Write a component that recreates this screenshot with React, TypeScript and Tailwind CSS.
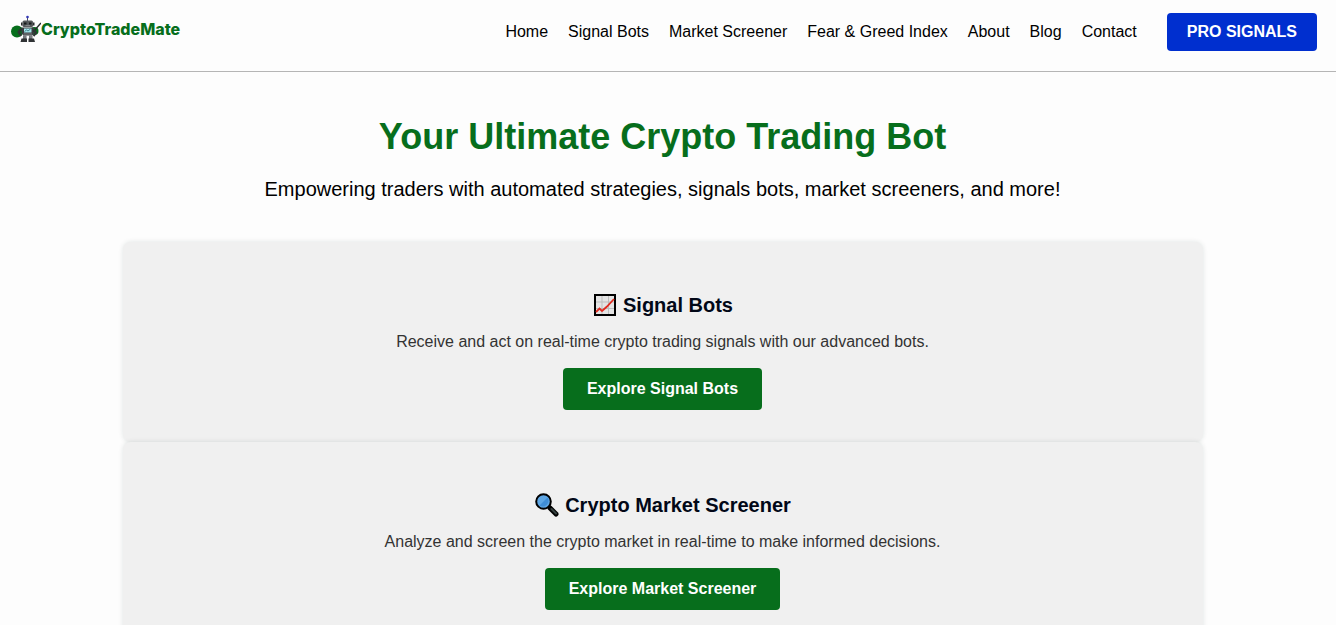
import type { ReactNode } from 'react'

const NAV_LINKS = [
  'Home',
  'Signal Bots',
  'Market Screener',
  'Fear & Greed Index',
  'About',
  'Blog',
  'Contact',
]

function RobotLogo() {
  return (
    <svg viewBox="0 0 30 28" className="h-7 w-[30px] shrink-0" aria-hidden="true">
      <circle cx="6" cy="16.500" r="6" fill="#076e1c" />
      <circle cx="23.500" cy="16" r="4" fill="#076e1c" />
      <path d="M16.500 6V2" stroke="#4a4c66" strokeWidth="1" />
      <circle cx="16.500" cy="2" r="1.300" fill="#3338b8" />
      <rect x="11.500" y="5.500" width="10.500" height="6.500" rx="1.500" fill="#55585b" />
      <path d="M10 7.500h1.500v3H10zM22 7.500h1.500v3H22z" fill="#2b2d2f" />
      <path d="M13 7.500h2.500v2H13zM18 7.500h2.500v2H18z" fill="#17191b" />
      <path d="M14.500 10.700h4.500" stroke="#9a9da0" strokeWidth=".8" />
      <path d="M10.500 12.500h12.500v6l-2 2h-8.500l-2-2z" fill="#3a3d40" />
      <path d="M13 13.500h7.500v4H13z" fill="#a4e6ec" />
      <path d="M13.500 16.500l2-1.500 1.500 1 2.500-2" stroke="#2b6e78" strokeWidth=".8" fill="none" />
      <path d="M22.500 16.500L30 8" stroke="#26292b" strokeWidth="1.400" fill="none" />
      <path d="M10.500 13.500L7.500 17l2.500 4M23 14.500l2 3.500-2.500 3" stroke="#303335" strokeWidth="2" fill="none" />
      <path d="M12 20.500h3.500V24H12zM18 20.500h3.500V24H18z" fill="#6a6d70" />
      <path d="M10.500 23.500H16V27H9.500zM17.500 23.500h5.500l1 3.500h-6.500z" fill="#303335" />
      <path d="M12.500 22h2.500M18.500 22H21M12.500 19h8.500" stroke="#94989b" strokeWidth=".8" />
    </svg>
  )
}

function ChartIcon() {
  return (
    <svg viewBox="0 0 24 24" className="size-6 shrink-0" aria-hidden="true">
      <path d="M2 2h20v20H2z" fill="#e4e4e4" stroke="#000" strokeWidth="2" />
      <path d="M9 3v18M15.500 3v18M3 9h18M3 15.500h18" stroke="#bdbdbd" strokeWidth="1" />
      <path d="M3 19l3.500-3.500L9 18l5-4.500L21 6" fill="none" stroke="#e02b20" strokeWidth="1.800" />
    </svg>
  )
}

function SearchIcon() {
  return (
    <svg viewBox="0 0 24 24" className="size-6 shrink-0" aria-hidden="true">
      <path d="M15 15l6 6" stroke="#000" strokeWidth="5" strokeLinecap="round" />
      <path d="M16.500 16l4.500 4.500" stroke="#34403f" strokeWidth="2" strokeLinecap="round" />
      <circle cx="8.500" cy="8.500" r="7.300" fill="#5ea6e4" stroke="#000" strokeWidth="2" />
      <path d="M4.500 12.500l8-8a5.800 5.800 0 0 1-8 8z" fill="#3f8dd6" />
    </svg>
  )
}

type FeatureCardProps = {
  icon: ReactNode
  title: string
  text: string
  action: string
}

function FeatureCard({ icon, title, text, action }: FeatureCardProps) {
  return (
    <section className="flex flex-col items-center rounded-lg bg-[#f0f0f0] px-8 pt-12 pb-8 text-center shadow-[0_0_5px_rgba(0,50,40,0.12)]">
      <h2 className="flex items-center gap-1.5 pl-px text-xl leading-[30px] font-bold text-[#020817]">
        {icon}
        {title}
      </h2>
      <p className="mt-2.5 leading-6 text-[#333]">{text}</p>
      <a
        href="#"
        className="mt-3.5 rounded bg-[#076e1c] px-6 py-[9px] leading-6 font-bold text-white"
      >
        {action}
      </a>
    </section>
  )
}

export default function App() {
  return (
    <div className="h-screen overflow-hidden bg-[#fdfdfd] font-['Liberation_Sans',Arial,sans-serif] text-base text-black">
      <header className="flex items-start justify-between border-b border-[#b5b5b5] pt-[13px] pr-[19px] pb-5 pl-[11px]">
        <a href="#" className="flex items-center pt-0.5 font-[Inter,sans-serif] leading-7 font-extrabold text-[#076e1c]">
          <RobotLogo />
          CryptoTradeMate
        </a>
        <nav className="flex items-center gap-5">
          {NAV_LINKS.map(label => (
            <a key={label} href="#">{label}</a>
          ))}
          <a href="#" className="ml-2.5 rounded bg-[#002fcf] px-5 py-[7px] font-bold text-white">
            PRO SIGNALS
          </a>
        </nav>
      </header>

      <main className="pt-10 pr-[11px]">
        <div className="text-center">
          <h1 className="text-4xl leading-[50px] font-bold text-[#076e1c]">
            Your Ultimate Crypto Trading Bot
          </h1>
          <p className="mt-3 text-xl leading-[30px]">
            Empowering traders with automated strategies, signals bots, market screeners, and more!
          </p>
        </div>

        <div className="mx-auto mt-[38px] max-w-[1080px]">
          <FeatureCard
            icon={<ChartIcon />}
            title="Signal Bots"
            text="Receive and act on real-time crypto trading signals with our advanced bots."
            action="Explore Signal Bots"
          />
          <FeatureCard
            icon={<SearchIcon />}
            title="Crypto Market Screener"
            text="Analyze and screen the crypto market in real-time to make informed decisions."
            action="Explore Market Screener"
          />
        </div>
      </main>
    </div>
  )
}
